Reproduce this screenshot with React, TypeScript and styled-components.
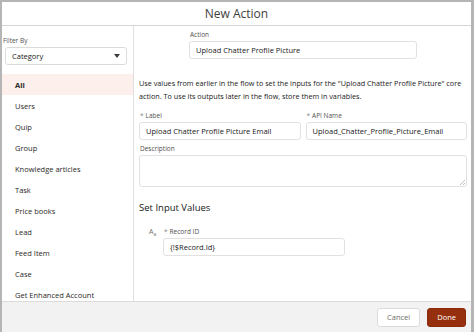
import React from 'react'
import styled, { createGlobalStyle } from 'styled-components'

const GlobalStyle = createGlobalStyle`
    html, body {
        margin: 0;
        padding: 0;
        background: #ffffff;
    }
    body {
        font-family: 'Open Sans', 'Liberation Sans', sans-serif;
        color: #181818;
    }
`

const categories = [
    'All',
    'Users',
    'Quip',
    'Group',
    'Knowledge articles',
    'Task',
    'Price books',
    'Lead',
    'Feed Item',
    'Case',
    'Get Enhanced Account',
]

const App: React.FC = () => {
    return (
        <React.Fragment>
            <GlobalStyle />
            <Frame>
                <Header>New Action</Header>
                <Body>
                    <Sidebar>
                        <FieldLabel>Filter By</FieldLabel>
                        <Select>
                            <span>Category</span>
                            <Caret />
                        </Select>
                        <CategoryList>
                            {categories.map((name, index) => (
                                <CategoryItem key={name} active={index === 0}>
                                    {name}
                                </CategoryItem>
                            ))}
                        </CategoryList>
                    </Sidebar>
                    <Main>
                        <ActionField>
                            <FieldLabel>Action</FieldLabel>
                            <Input>Upload Chatter Profile Picture</Input>
                        </ActionField>
                        <Help>
                            Use values from earlier in the flow to set the inputs for the
                            "Upload Chatter Profile Picture" core action. To use its outputs
                            later in the flow, store them in variables.
                        </Help>
                        <Row>
                            <Field>
                                <FieldLabel>
                                    <Req>*</Req>Label
                                </FieldLabel>
                                <Input>Upload Chatter Profile Picture Email</Input>
                            </Field>
                            <Field>
                                <FieldLabel>
                                    <Req>*</Req>API Name
                                </FieldLabel>
                                <Input>Upload_Chatter_Profile_Picture_Email</Input>
                            </Field>
                        </Row>
                        <Field>
                            <FieldLabel>Description</FieldLabel>
                            <TextArea>
                                <Grip width="6" height="6" viewBox="0 0 6 6">
                                    <path d="M6 1 L1 6 M6 4 L4 6" stroke="#b0adab" strokeWidth="0.8" />
                                </Grip>
                            </TextArea>
                        </Field>
                        <SectionTitle>Set Input Values</SectionTitle>
                        <InputRow>
                            <TypeIcon>
                                A<sub>a</sub>
                            </TypeIcon>
                            <RecordField>
                                <FieldLabel>
                                    <Req>*</Req>Record ID
                                </FieldLabel>
                                <Input>{'{!$Record.Id}'}</Input>
                            </RecordField>
                        </InputRow>
                    </Main>
                </Body>
                <Footer>
                    <Button>Cancel</Button>
                    <Button brand>Done</Button>
                </Footer>
            </Frame>
        </React.Fragment>
    )
}

export default App

const Frame = styled.div`
    box-sizing: border-box;
    width: 474px;
    height: 332px;
    display: flex;
    flex-direction: column;
    border-top: 2px solid #b5b5b5;
    border-left: 2px solid #b5b5b5;
    border-right: 3px solid #b5b5b5;
    overflow: hidden;
`

const Header = styled.div`
    height: 23px;
    flex-shrink: 0;
    display: flex;
    align-items: center;
    justify-content: center;
    border-bottom: 1px solid #d4d4d4;
    font-size: 12px;
    color: #3e3e3c;
`

const Body = styled.div`
    flex: 1;
    display: flex;
    min-height: 0;
`

const Sidebar = styled.div`
    width: 132px;
    flex-shrink: 0;
    border-right: 1px solid #e0e0e0;
    padding-top: 10px;
    box-sizing: border-box;
`

const FieldLabel = styled.div`
    font-size: 6.5px;
    color: #514f4d;
    line-height: 9px;
    margin-bottom: 2px;
    padding-left: 1px;
`

const Req = styled.span`
    color: #8a8886;
    margin-right: 2px;
`

const Select = styled.div`
    margin: 0 6px 0 3px;
    height: 18px;
    box-sizing: border-box;
    border: 1px solid #dddbda;
    border-radius: 3px;
    display: flex;
    align-items: center;
    justify-content: space-between;
    padding: 0 6px;
    font-size: 7.5px;
`

const Caret = styled.span`
    width: 0;
    height: 0;
    border-left: 3px solid transparent;
    border-right: 3px solid transparent;
    border-top: 4px solid #3e3e3c;
`

const CategoryList = styled.div`
    margin-top: 9px;
`

const CategoryItem = styled.div<{ active?: boolean }>`
    height: 21px;
    display: flex;
    align-items: center;
    padding-left: 13px;
    font-size: 7.5px;
    color: #2b2826;
    font-weight: ${(props) => (props.active ? 700 : 400)};
    background: ${(props) => (props.active ? '#fcefec' : 'transparent')};
`

const Main = styled.div`
    flex: 1;
    padding: 4px 4px 0 5px;
    box-sizing: border-box;
`

const ActionField = styled.div`
    margin-left: 50px;
    width: 228px;
`

const Input = styled.div`
    height: 18px;
    box-sizing: border-box;
    border: 1px solid #e3e1e0;
    border-radius: 3px;
    display: flex;
    align-items: center;
    padding: 0 6px;
    font-size: 7.5px;
    white-space: nowrap;
    overflow: hidden;
`

const Help = styled.p`
    margin: 18px 0 8px;
    font-size: 7.25px;
    line-height: 13px;
    color: #181818;
`

const Row = styled.div`
    display: flex;
    gap: 5px;
`

const Field = styled.div`
    flex: 1;
    margin-bottom: 4px;
`

const TextArea = styled.div`
    position: relative;
    height: 32px;
    box-sizing: border-box;
    border: 1px solid #e3e1e0;
    border-radius: 3px;
`

const Grip = styled.svg`
    position: absolute;
    right: 1px;
    bottom: 1px;
`

const SectionTitle = styled.div`
    margin-top: 14px;
    font-size: 9.5px;
    color: #181818;
`

const InputRow = styled.div`
    display: flex;
    margin-top: 13px;
    padding-left: 10px;
`

const TypeIcon = styled.div`
    width: 14px;
    font-size: 7px;
    color: #706e6b;
    line-height: 9px;
    sub {
        font-size: 5px;
    }
`

const RecordField = styled.div`
    width: 182px;
`

const Footer = styled.div`
    height: 31px;
    flex-shrink: 0;
    background: #f3f2f2;
    border-top: 1px solid #dddbda;
    display: flex;
    align-items: center;
    justify-content: flex-end;
    gap: 7px;
    padding-right: 5px;
    box-sizing: border-box;
`

const Button = styled.div<{ brand?: boolean }>`
    height: 19px;
    box-sizing: border-box;
    padding: 0 9px;
    display: flex;
    align-items: center;
    border-radius: 3px;
    font-size: 7.5px;
    border: 1px solid ${(props) => (props.brand ? '#8c2a0c' : '#dddbda')};
    background: ${(props) => (props.brand ? '#962f0e' : '#ffffff')};
    color: ${(props) => (props.brand ? '#ffffff' : '#706e6b')};
`
